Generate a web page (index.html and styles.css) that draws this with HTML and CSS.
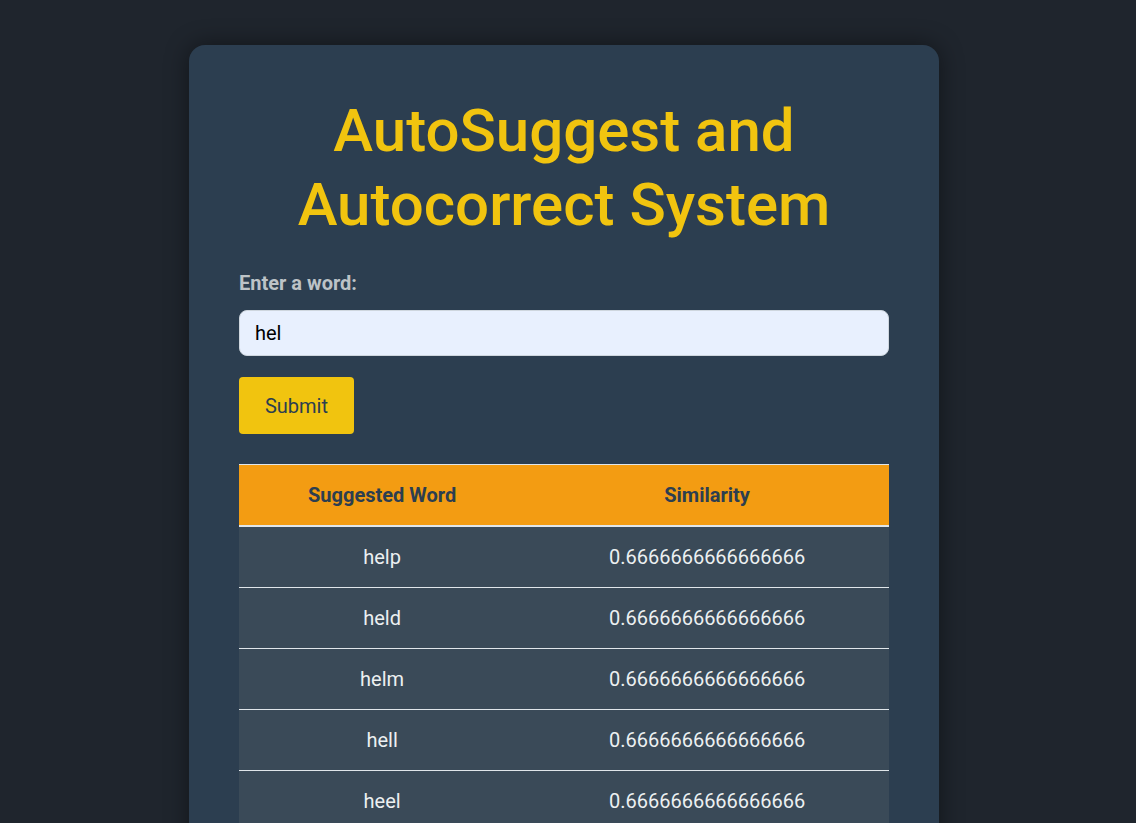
FILE: index.html
```html
<!DOCTYPE html>
<html lang="en">
<head>
<meta charset="utf-8">
<title>AutoSuggest and Autocorrect System</title>
<link rel="stylesheet" href="styles.css">
</head>
<body>
<div class="card">
  <h1 class="title">AutoSuggest and Autocorrect System</h1>
  <form class="form">
    <label class="label" for="word">Enter a word:</label>
    <input class="input" id="word" type="text" value="hel">
    <button class="btn" type="button">Submit</button>
  </form>
  <table class="results">
    <thead>
      <tr><th>Suggested Word</th><th>Similarity</th></tr>
    </thead>
    <tbody>
      <tr><td>help</td><td>0.6666666666666666</td></tr>
      <tr><td>held</td><td>0.6666666666666666</td></tr>
      <tr><td>helm</td><td>0.6666666666666666</td></tr>
      <tr><td>hell</td><td>0.6666666666666666</td></tr>
      <tr><td>heel</td><td>0.6666666666666666</td></tr>
    </tbody>
  </table>
</div>
</body>
</html>
```

FILE: styles.css
```css
html, body {
  margin: 0;
  padding: 0;
}
body {
  background: #1f252d;
  font-family: Roboto, "Liberation Sans", sans-serif;
  color: #ecf0f1;
  padding: 45px 8px 0 0;
  min-height: 100vh;
  box-sizing: border-box;
}
.card {
  width: 650px;
  margin: 0 auto;
  padding: 49px 50px 50px;
  background: #2c3e50;
  border-radius: 16px;
  box-shadow: 0 0 25px rgba(0, 0, 0, 0.45);
}
.title {
  margin: 0 0 30px;
  text-align: center;
  color: #f1c40f;
  font-size: 60px;
  font-weight: 500;
  line-height: 74px;
}
.form {
  display: flex;
  flex-direction: column;
  align-items: flex-start;
}
.label {
  font-size: 20px;
  font-weight: 700;
  color: #bdc3c7;
  line-height: 23px;
  margin-bottom: 15px;
}
.input {
  width: 100%;
  box-sizing: border-box;
  height: 46px;
  padding: 0 15px;
  border: 1px solid #ced6de;
  border-radius: 8px;
  background: #e8f0fe;
  font-family: Roboto, "Liberation Sans", sans-serif;
  font-size: 20px;
  color: #000;
  margin-bottom: 21px;
}
.btn {
  width: 115px;
  height: 57px;
  border: none;
  border-radius: 4px;
  background: #f1c40f;
  color: #2c3e50;
  font-family: Roboto, "Liberation Sans", sans-serif;
  font-size: 20px;
  margin-bottom: 30px;
}
.results {
  width: 100%;
  border-collapse: collapse;
  font-size: 20px;
}
.results thead tr {
  border-top: 1px solid #e0e6ea;
}
.results th {
  background: #f39c12;
  color: #2c3e50;
  font-weight: 700;
  height: 60px;
  padding: 0 15px;
  border-bottom: 2px solid #e0e6ea;
}
.results td {
  background: #3a4a58;
  color: #ecf0f1;
  text-align: center;
  height: 60px;
  padding: 0 15px;
  border-bottom: 1px solid #e0e6ea;
}
```
